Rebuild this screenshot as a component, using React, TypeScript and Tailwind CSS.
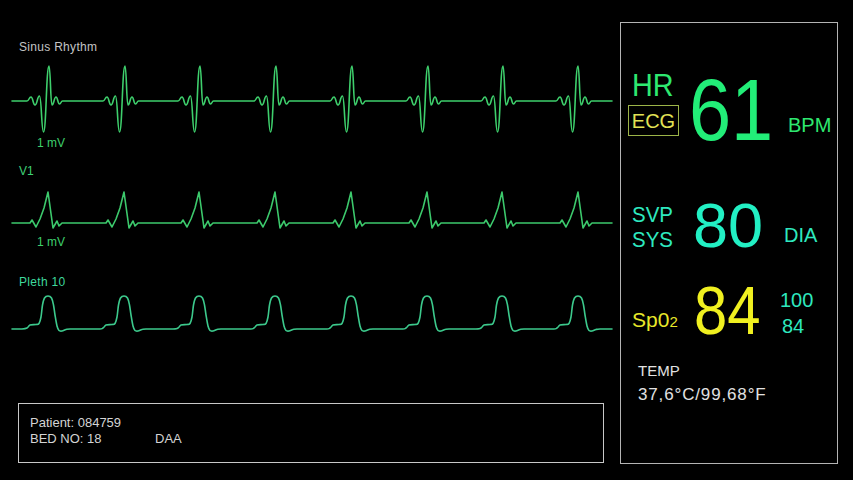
type Pt = [number, number];

// beat centres (svg coords, trace starts at x = 12 on the page)
const ECG_BEATS = [37, 113, 188, 264, 340, 416, 491, 566];
const V1_BEATS = [36, 112, 187, 263, 339, 415, 490, 566];
const PLETH_BEATS = [36, 112, 187, 263, 339, 415, 490, 566];

const ECG_TEMPLATE: Pt[] = [
  [-22, 0], [-18, -4], [-14, 4], [-9.5, -5], [-5.5, 31], [0, -35],
  [3, 4], [7, -4], [10.5, 3], [13.5, 0],
];

const V1_TEMPLATE: Pt[] = [
  [-18, 0], [-16, -3], [-12, 4], [-8, -4], [-4, -15], [0, -31],
  [5, 5], [9, -2], [11, 3], [14, 0],
];

const PLETH_TEMPLATE: Pt[] = [
  [-26, 0], [-21, -1], [-18, -4], [-12, -4.5], [-9, -5.5], [-7, -12],
  [-5.5, -24], [-3.5, -31], [0, -33], [3.5, -31], [5.5, -24], [7, -14],
  [9, -3], [11, 1.5], [14, 2], [18, 0.5], [22, 0],
];

function buildPoints(beats: number[], template: Pt[], base: number, width: number): Pt[] {
  const pts: Pt[] = [[0, base]];
  for (const cx of beats) {
    for (const [dx, dy] of template) pts.push([cx + dx, base + dy]);
  }
  pts.push([width, base]);
  return pts;
}

// every point is an extremum: cubic segments with flat tangents
function smoothFlat(pts: Pt[]) {
  let d = `M${pts[0][0]} ${pts[0][1]}`;
  for (let i = 1; i < pts.length; i++) {
    const [x0, y0] = pts[i - 1];
    const [x1, y1] = pts[i];
    const mx = (x0 + x1) / 2;
    d += ` C${mx} ${y0} ${mx} ${y1} ${x1} ${y1}`;
  }
  return d;
}

function catmullRom(pts: Pt[]) {
  let d = `M${pts[0][0]} ${pts[0][1]}`;
  for (let i = 0; i < pts.length - 1; i++) {
    const p0 = pts[i - 1] ?? pts[i];
    const p1 = pts[i];
    const p2 = pts[i + 1];
    const p3 = pts[i + 2] ?? p2;
    const c1x = p1[0] + (p2[0] - p0[0]) / 6;
    const c1y = p1[1] + (p2[1] - p0[1]) / 6;
    const c2x = p2[0] - (p3[0] - p1[0]) / 6;
    const c2y = p2[1] - (p3[1] - p1[1]) / 6;
    d += ` C${c1x} ${c1y} ${c2x} ${c2y} ${p2[0]} ${p2[1]}`;
  }
  return d;
}

function polyline(pts: Pt[]) {
  return pts.map(([x, y], i) => `${i ? 'L' : 'M'}${x} ${y}`).join(' ');
}

const ecgPath = smoothFlat(buildPoints(ECG_BEATS, ECG_TEMPLATE, 47, 600));
const v1Path = polyline(buildPoints(V1_BEATS, V1_TEMPLATE, 45, 600));
const plethPath = catmullRom(buildPoints(PLETH_BEATS, PLETH_TEMPLATE, 40, 600));

function Trace({ d, height, color }: { d: string; height: number; color: string }) {
  return (
    <svg width={600} height={height} viewBox={`0 0 600 ${height}`} className="block overflow-visible">
      <path d={d} fill="none" stroke={color} strokeWidth={1.6} strokeLinejoin="round" strokeLinecap="round" />
    </svg>
  )
}

export default function App() {
  return (
    <div className="flex w-[853px] h-[480px] bg-black overflow-hidden font-['Liberation_Sans',Arial,sans-serif]">
      {/* Waveforms */}
      <div className="w-[620px] flex flex-col pl-[12px] pt-[40px] pb-[17px]">
        <div className="ml-[7px] text-[12px] leading-[14px] tracking-[0.3px] text-[#c4c4c4]">Sinus Rhythm</div>
        <Trace d={ecgPath} height={82} color="#3ecf6c" />
        <div className="ml-[25px] text-[12px] leading-[14px] text-[#3ecf6c]">1 mV</div>

        <div className="mt-[14px] ml-[7px] text-[12px] leading-[14px] text-[#3fd077]">V1</div>
        <Trace d={v1Path} height={57} color="#3cc96c" />
        <div className="ml-[25px] text-[12px] leading-[14px] text-[#3ecf6c]">1 mV</div>

        <div className="mt-[26px] ml-[7px] text-[12px] leading-[14px] tracking-[0.3px] text-[#3ed89c]">Pleth 10</div>
        <Trace d={plethPath} height={51} color="#3cc98c" />

        {/* Patient info */}
        <div className="mt-auto ml-[6px] w-[586px] h-[60px] border border-[#c8c8c8] pl-[11px] pt-[11px] text-[13px] leading-[16px] text-[#d4d4d4]">
          <div>Patient: 084759</div>
          <div className="flex">
            <span className="w-[125px]">BED NO: 18</span>
            <span>DAA</span>
          </div>
        </div>
      </div>

      {/* Vitals panel */}
      <div className="mt-[22px] w-[218px] h-[442px] border border-[#b4b4b4] pt-[43px]">
        <div className="flex items-start pl-[7px]">
          <div className="w-[51px] flex flex-col">
            <div className="mt-[3px] ml-[4px] origin-left scale-x-[0.9] text-[32px] leading-none text-[#2ee870]">HR</div>
            <div className="mt-[4px] w-[51px] h-[31px] border border-[#9cb448] flex items-center justify-center text-[20px] leading-none text-[#e2e255]">
              ECG
            </div>
          </div>
          <div className="ml-[10px] w-[80px] origin-left scale-x-[0.86] text-[88px] leading-none text-[#22ee78]">61</div>
          <div className="ml-[19px] mt-[49px] text-[20px] leading-none text-[#2ee870]">BPM</div>
        </div>

        <div className="mt-[40px] flex items-start pl-[11px]">
          <div className="w-[61px] mt-[8px] origin-left scale-x-[0.93] text-[22px] leading-[25px] text-[#2ee8bf]">
            <div>SVP</div>
            <div>SYS</div>
          </div>
          <div className="text-[63px] leading-none text-[#22f0c4]">80</div>
          <div className="ml-[21px] mt-[31px] text-[20px] leading-none text-[#2ee8bf]">DIA</div>
        </div>

        <div className="mt-[19px] flex items-start pl-[11px]">
          <div className="w-[62px] mt-[33px] text-[21px] leading-none text-[#e8e82a]">
            Sp0<span className="text-[15px]">2</span>
          </div>
          <div className="w-[76px] origin-left scale-x-[0.88] text-[68px] leading-none text-[#f0f020]">84</div>
          <div className="ml-[10px] mt-[11px] text-[20px] leading-[26px] text-[#2ee8bf]">
            <div>100</div>
            <div className="ml-[2px]">84</div>
          </div>
        </div>

        <div className="mt-[19px] pl-[17px] text-[15px] leading-none text-[#e2e2e2]">TEMP</div>
        <div className="mt-[8px] pl-[17px] text-[17px] leading-none tracking-[0.05em] text-[#e2e2e2]">37,6°C/99,68°F</div>
      </div>
    </div>
  )
}
